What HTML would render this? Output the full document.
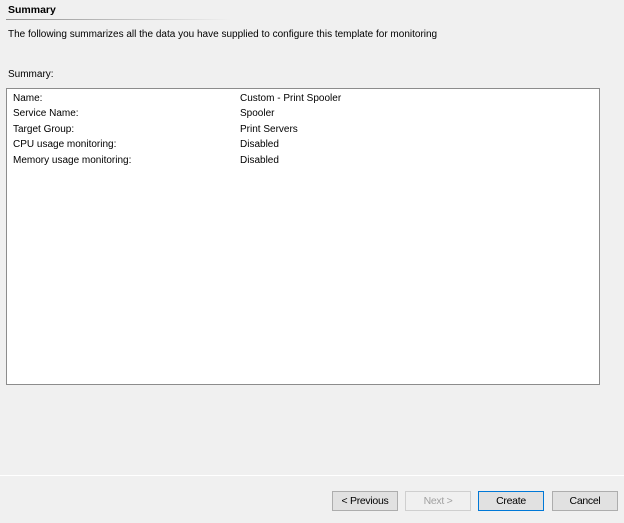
<!DOCTYPE html>
<html><head><style>
body{margin:0;width:624px;height:523px;background:#f0f0f0;font-family:"Liberation Sans",sans-serif;font-size:10px;color:#000;position:relative;overflow:hidden}
.a{position:absolute;white-space:nowrap;line-height:13px}
.line{position:absolute;left:6px;top:19px;width:225px;height:1px;background:linear-gradient(to right,#909090,#f0f0f0)}
.box{position:absolute;left:6px;top:88px;width:592px;height:295px;background:#fff;border:1px solid #8c8c8c}
.sep{position:absolute;left:0;top:475px;width:624px;height:1px;background:#fff}
.btn{position:absolute;top:491px;height:18px;width:64px;border:1px solid #adadad;background:#e1e1e1;text-align:center;line-height:18px;font-size:10.5px;letter-spacing:-0.3px}
</style></head><body>
<div class="a" style="left:8px;top:4px;font-weight:bold;font-size:10.5px">Summary</div>
<div class="line"></div>
<div class="a" style="left:8px;top:28px">The following summarizes all the data you have supplied to configure this template for monitoring</div>
<div class="a" style="left:8px;top:68px">Summary:</div>
<div class="box"></div>
<div class="a" style="left:13px;top:92px">Name:</div><div class="a" style="left:240px;top:92px">Custom - Print Spooler</div>
<div class="a" style="left:13px;top:107px">Service Name:</div><div class="a" style="left:240px;top:107px">Spooler</div>
<div class="a" style="left:13px;top:123px">Target Group:</div><div class="a" style="left:240px;top:123px">Print Servers</div>
<div class="a" style="left:13px;top:138px">CPU usage monitoring:</div><div class="a" style="left:240px;top:138px">Disabled</div>
<div class="a" style="left:13px;top:154px">Memory usage monitoring:</div><div class="a" style="left:240px;top:154px">Disabled</div>
<div class="sep"></div>
<div class="btn" style="left:332px">&lt; Previous</div>
<div class="btn" style="left:405px;color:#a0a0a0;border-color:#cfcfcf;background:#f0f0f0">Next &gt;</div>
<div class="btn" style="left:478px;border-color:#0078d7">Create</div>
<div class="btn" style="left:552px">Cancel</div>
</body></html>
